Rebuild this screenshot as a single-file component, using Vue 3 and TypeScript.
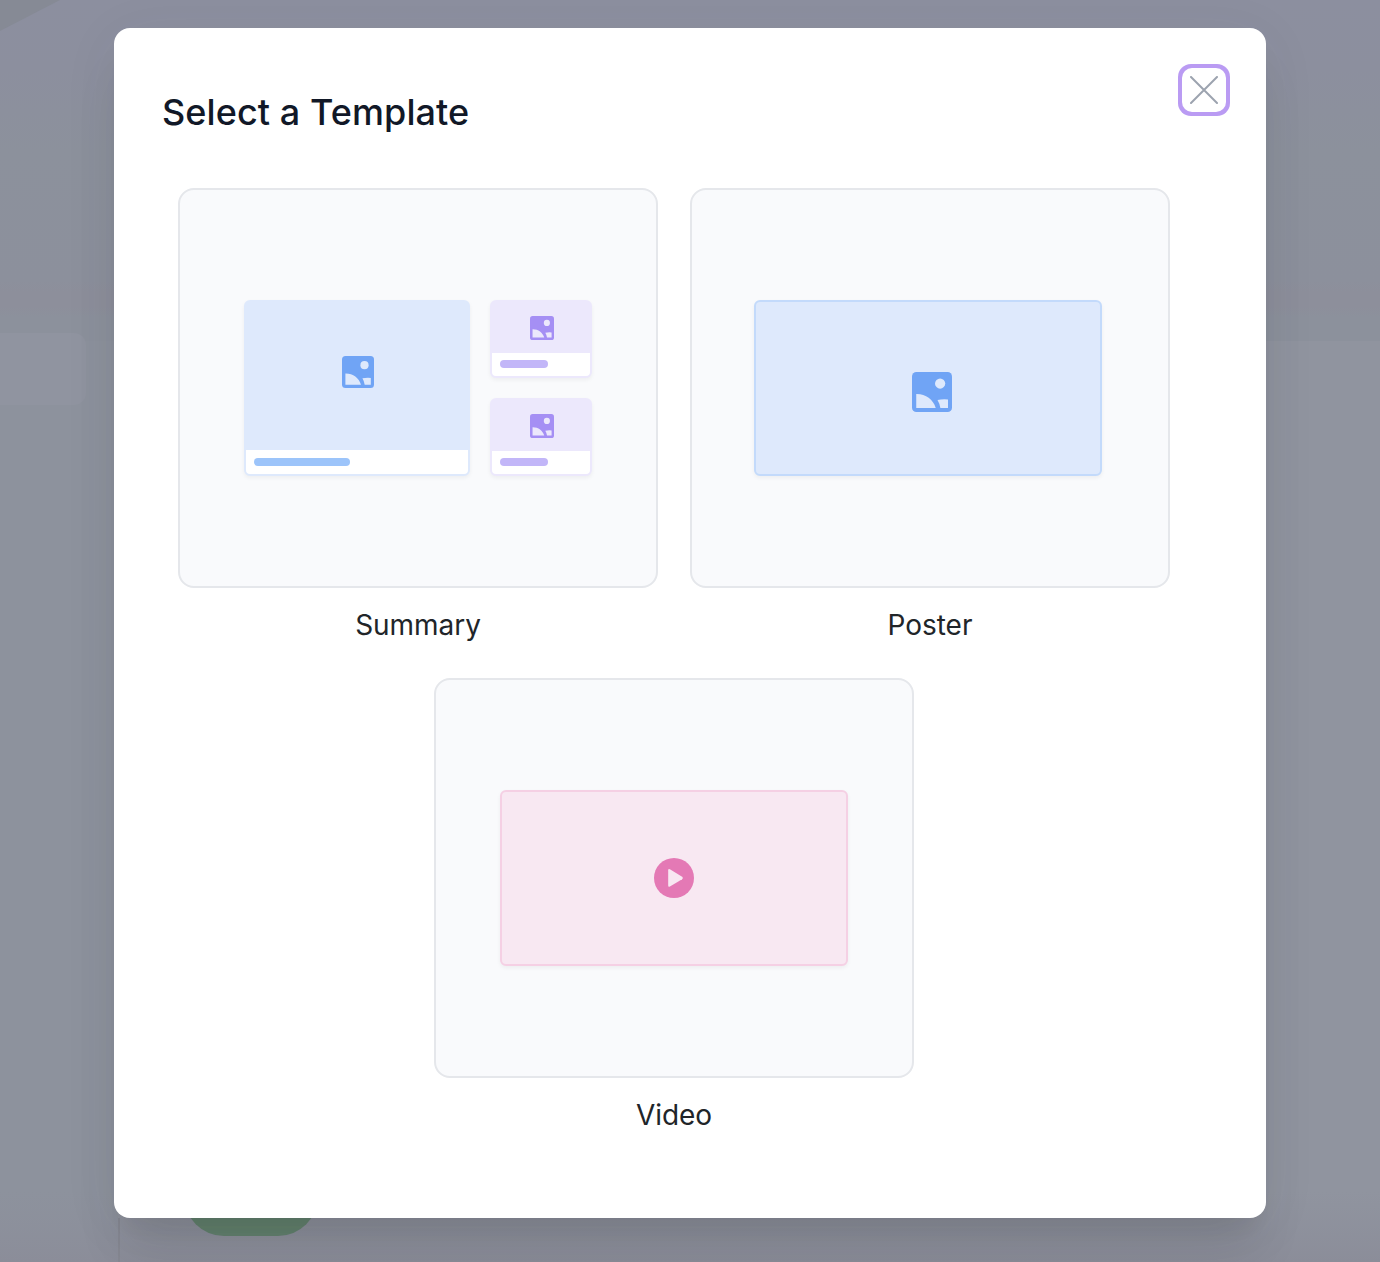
<script setup lang="ts">
interface Template {
  id: 'summary' | 'poster' | 'video'
  label: string
}

const templates: Template[] = [
  { id: 'summary', label: 'Summary' },
  { id: 'poster', label: 'Poster' },
  { id: 'video', label: 'Video' },
]
</script>

<template>
  <div class="page">
    <div class="backdrop" aria-hidden="true">
      <svg class="scene" viewBox="0 0 1380 1262" preserveAspectRatio="none">
        <defs>
          <linearGradient id="sky" x1="0" y1="0" x2="0" y2="1">
            <stop offset="0" stop-color="#8c8f9f" />
            <stop offset="0.2" stop-color="#8c8f9e" />
            <stop offset="0.45" stop-color="#8c919c" />
            <stop offset="0.82" stop-color="#8c909c" />
            <stop offset="0.86" stop-color="#8d8f9b" />
            <stop offset="0.9" stop-color="#8d8f9b" />
            <stop offset="0.93" stop-color="#8c919c" />
            <stop offset="1" stop-color="#8c919c" />
          </linearGradient>
          <linearGradient id="foot" x1="0" y1="0" x2="0" y2="1">
            <stop offset="0" stop-color="#8c8f9b" stop-opacity="0" />
            <stop offset="1" stop-color="#8b8d99" />
          </linearGradient>
        </defs>
        <rect width="1380" height="1262" fill="#90949f" />
        <rect width="1380" height="341" fill="url(#sky)" />
        <rect y="341" width="118" height="921" fill="#8d929d" />
        <path d="M0 0H60L0 31Z" fill="#868a95" />
        <path d="M0 333H74A12 12 0 0 1 86 345V393A12 12 0 0 1 74 405H0Z" fill="#9094a0" />
        <rect y="1190" width="1380" height="72" fill="url(#foot)" />
        <rect x="118" y="1218" width="2" height="44" fill="#868892" />
        <rect x="184" y="1156" width="134" height="80" rx="40" fill="#64846f" />
      </svg>
    </div>

    <section class="modal" role="dialog" aria-labelledby="modal-title">
      <h2 id="modal-title" class="title">Select a Template</h2>
      <button class="close" type="button" aria-label="Close">
        <svg viewBox="0 0 28 28"><path d="M1 1L27 27M27 1L1 27" /></svg>
      </button>

      <div class="templates">
        <div v-for="t in templates" :key="t.id" class="template">
          <div class="card">
            <div v-if="t.id === 'summary'" class="summary">
              <div class="tile blue">
                <div class="media">
                  <svg class="picture" viewBox="0 0 32 32">
                    <rect class="ink" width="32" height="32" rx="3.5" />
                    <circle class="cut" cx="22.5" cy="9.2" r="4.1" />
                    <path class="cut" d="M3.4 17.6C10.8 17.4 16.9 21.8 19 28.7H3.4ZM20.4 22.3Q24.4 21.5 28.8 21.9V28.7H22.7Q22.3 25.5 20.4 22.3Z" />
                  </svg>
                </div>
                <div class="caption"><span class="bar"></span></div>
              </div>
              <div class="side">
                <div v-for="n in 2" :key="n" class="tile purple">
                  <div class="media">
                    <svg class="picture" viewBox="0 0 32 32">
                      <rect class="ink" width="32" height="32" rx="3.5" />
                      <circle class="cut" cx="22.5" cy="9.2" r="4.1" />
                      <path class="cut" d="M3.4 17.6C10.8 17.4 16.9 21.8 19 28.7H3.4ZM20.4 22.3Q24.4 21.5 28.8 21.9V28.7H22.7Q22.3 25.5 20.4 22.3Z" />
                    </svg>
                  </div>
                  <div class="caption"><span class="bar"></span></div>
                </div>
              </div>
            </div>

            <div v-else-if="t.id === 'poster'" class="banner poster">
              <svg class="picture" viewBox="0 0 32 32">
                <rect class="ink" width="32" height="32" rx="3.5" />
                <circle class="cut" cx="22.5" cy="9.2" r="4.1" />
                <path class="cut" d="M3.4 17.6C10.8 17.4 16.9 21.8 19 28.7H3.4ZM20.4 22.3Q24.4 21.5 28.8 21.9V28.7H22.7Q22.3 25.5 20.4 22.3Z" />
              </svg>
            </div>

            <div v-else class="banner video">
              <svg class="play" viewBox="0 0 40 40">
                <circle class="ink" cx="20" cy="20" r="20" />
                <path class="cut" d="M14.2 12.3Q14.2 10.4 15.9 11.3L28.1 18.8Q29.9 20 28.1 21.2L15.9 28.4Q14.2 29.3 14.2 27.5Z" />
              </svg>
            </div>
          </div>
          <div class="label">{{ t.label }}</div>
        </div>
      </div>
    </section>
  </div>
</template>

<style>
body {
  margin: 0;
  overflow: hidden;
}
</style>

<style scoped>
.page {
  position: relative;
  box-sizing: border-box;
  width: 1380px;
  height: 1262px;
  padding: 28px 114px 44px;
  overflow: hidden;
  font-family: Inter, 'Liberation Sans', sans-serif;
}
.backdrop {
  position: absolute;
  inset: 0;
}
.scene {
  display: block;
  width: 100%;
  height: 100%;
}
.modal {
  position: relative;
  box-sizing: border-box;
  height: 1190px;
  padding: 56px 80px 0 48px;
  border-radius: 16px;
  background: #fff;
  box-shadow: 0 40px 50px -10px rgba(0, 0, 0, 0.1), 0 20px 20px -10px rgba(0, 0, 0, 0.04), 0 10px 60px rgba(60, 60, 85, 0.06);
}
.title {
  margin: 0;
  font-size: 36px;
  font-weight: 500;
  line-height: 56px;
  letter-spacing: 0.08px;
  color: #111827;
}
.close {
  position: absolute;
  top: 40px;
  right: 40px;
  display: flex;
  align-items: center;
  justify-content: center;
  width: 44px;
  height: 44px;
  padding: 0;
  border: 0;
  border-radius: 10px;
  background: #fff;
}
.close::before {
  content: '';
  position: absolute;
  inset: -4px;
  z-index: -1;
  border-radius: 13px;
  background: #ba9bf3;
}
.modal {
  isolation: isolate;
}
.close svg {
  width: 28px;
  height: 28px;
  fill: none;
  stroke: #9ca3af;
  stroke-width: 2;
  stroke-linecap: round;
}
.templates {
  display: flex;
  flex-wrap: wrap;
  justify-content: center;
  gap: 32px;
  padding-top: 48px;
}
.template {
  width: 480px;
}
.card {
  display: flex;
  align-items: center;
  justify-content: center;
  box-sizing: border-box;
  height: 400px;
  border: 2px solid #e5e7eb;
  border-radius: 16px;
  background: #f9fafc;
}
.label {
  margin-top: 16px;
  font-size: 28px;
  line-height: 42px;
  letter-spacing: -0.04px;
  text-align: center;
  color: #212529;
}
.summary {
  display: flex;
  gap: 20px;
  height: 176px;
}
.side {
  display: flex;
  flex-direction: column;
  gap: 20px;
}
.tile {
  display: flex;
  flex-direction: column;
  box-sizing: border-box;
  border: 2px solid var(--tint);
  border-radius: 6px;
  background: #fff;
  box-shadow: 0 2px 4px rgba(0, 0, 0, 0.05);
}
.media {
  display: flex;
  flex: 1;
  align-items: center;
  justify-content: center;
  background: var(--tint);
}
.caption {
  display: flex;
  align-items: center;
  height: 24px;
  padding-left: 8px;
}
.bar {
  height: 8px;
  border-radius: 4px;
}
.ink {
  fill: var(--ink);
}
.cut {
  fill: var(--tint);
}
.blue {
  --tint: #dee9fc;
  --ink: #70a4f5;
  width: 226px;
}
.blue .picture {
  width: 32px;
  height: 32px;
  margin: 0 0 8px 2px;
}
.blue .bar {
  width: 96px;
  background: #9cc4fa;
}
.purple {
  --tint: #ece8fc;
  --ink: #a58ff4;
  width: 102px;
  height: 78px;
}
.purple .picture {
  width: 24px;
  height: 24px;
  margin: 2px 0 0 2px;
}
.purple .caption {
  flex: none;
  height: 23.5px;
}
.purple .bar {
  width: 48px;
  background: #c2b6f8;
}
.banner {
  display: flex;
  align-items: center;
  justify-content: center;
  box-sizing: border-box;
  width: 348px;
  height: 176px;
  border: 2px solid var(--edge);
  border-radius: 6px;
  background: var(--tint);
  box-shadow: 0 2px 4px rgba(0, 0, 0, 0.05);
}
.poster {
  --tint: #dee9fc;
  --edge: #c3dafb;
  --ink: #70a4f5;
  margin-right: 4px;
}
.poster .picture {
  width: 40px;
  height: 40px;
  margin: 8px 0 0 8px;
}
.video {
  --tint: #f8e8f2;
  --edge: #f5d0e4;
  --ink: #e479b5;
}
.play {
  width: 40px;
  height: 40px;
}
</style>
